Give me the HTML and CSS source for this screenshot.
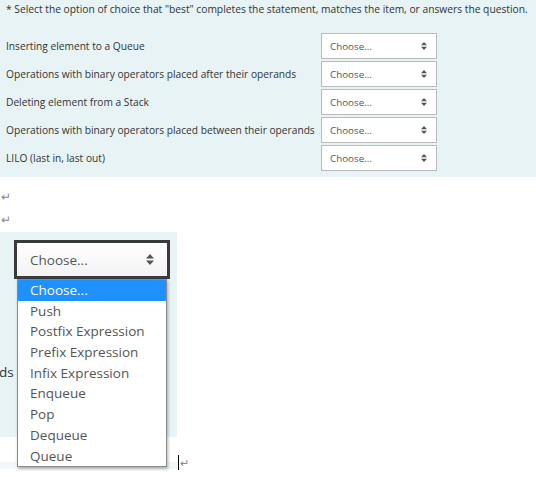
FILE: index.html
```html
<!DOCTYPE html>
<html lang="en">
<head>
    <meta charset="UTF-8">
    <title>Matching question</title>
    <link rel="stylesheet" href="styles.css">
</head>
<body>
    <div class="question">
        <p class="prompt">* Select the option of choice that "best" completes the statement, matches the item, or answers the question.</p>
        <div class="rows">
            <div class="label">Inserting element to a Queue</div>
            <div class="choose">Choose... <svg class="arrows" width="6" height="8" viewBox="0 0 6 8"><path d="M0 3.3 L3 0 L6 3.3 Z M0 4.7 L3 8 L6 4.7 Z"/></svg></div>
            <div class="label">Operations with binary operators placed after their operands</div>
            <div class="choose">Choose... <svg class="arrows" width="6" height="8" viewBox="0 0 6 8"><path d="M0 3.3 L3 0 L6 3.3 Z M0 4.7 L3 8 L6 4.7 Z"/></svg></div>
            <div class="label">Deleting element from a Stack</div>
            <div class="choose">Choose... <svg class="arrows" width="6" height="8" viewBox="0 0 6 8"><path d="M0 3.3 L3 0 L6 3.3 Z M0 4.7 L3 8 L6 4.7 Z"/></svg></div>
            <div class="label">Operations with binary operators placed between their operands</div>
            <div class="choose">Choose... <svg class="arrows" width="6" height="8" viewBox="0 0 6 8"><path d="M0 3.3 L3 0 L6 3.3 Z M0 4.7 L3 8 L6 4.7 Z"/></svg></div>
            <div class="label">LILO (last in, last out)</div>
            <div class="choose">Choose... <svg class="arrows" width="6" height="8" viewBox="0 0 6 8"><path d="M0 3.3 L3 0 L6 3.3 Z M0 4.7 L3 8 L6 4.7 Z"/></svg></div>
        </div>
    </div>

    <div class="returns">
        <div class="return">↵</div>
        <div class="return">↵</div>
    </div>

    <div class="answer">
        <div class="big-choose">
            <span>Choose...</span>
            <svg class="arrows" width="8" height="11" viewBox="0 0 8 11"><path d="M0 4.5 L4 0 L8 4.5 Z M0 6.5 L4 11 L8 6.5 Z"/></svg>
        </div>
        <div class="cut">ds</div>
        <ul class="options">
            <li class="selected">Choose...</li>
            <li>Push</li>
            <li>Postfix Expression</li>
            <li>Prefix Expression</li>
            <li>Infix Expression</li>
            <li>Enqueue</li>
            <li>Pop</li>
            <li>Dequeue</li>
            <li>Queue</li>
        </ul>
    </div>
    <div class="after">
        <div class="strip"></div>
        <div class="caret">↵</div>
    </div>
</body>
</html>
```

FILE: styles.css
```css
body {
    margin: 0;
    font-family: 'Open Sans', sans-serif;
    color: #333;
    background: #fff;
}
.question {
    background-color: #e7f3f5;
    padding: 3px 6px 5px;
    height: 169px;
}
.prompt {
    margin: 0 0 17px;
    font-size: 10.25px;
    line-height: 13px;
    white-space: nowrap;
}
.rows {
    display: grid;
    grid-template-columns: 315px 116px;
    row-gap: 2px;
    align-items: center;
    font-size: 10.2px;
}
.choose {
    height: 24px;
    border: 1px solid #bbb;
    background-color: #fff;
    display: flex;
    align-items: center;
    justify-content: space-between;
    padding: 0 9px 0 8px;
    color: #555;
    font-size: 9.8px;
}
.arrows {
    fill: #555;
}
.returns {
    padding-top: 8px;
}
.return {
    color: #888;
    font-size: 12px;
    line-height: 23px;
    padding-left: 1px;
    height: 23px;
}
.answer {
    position: relative;
    width: 177px;
    height: 205px;
    margin-top: 1px;
    background-color: #e7f3f5;
    padding-top: 8px;
    box-sizing: border-box;
}
.big-choose {
    margin-left: 14px;
    height: 33px;
    border: 3px solid #3a3a3a;
    background: linear-gradient(#fff, #f3f3f3);
    display: flex;
    align-items: center;
    justify-content: space-between;
    padding: 0 13px 0 13px;
    width: 124px;
    font-size: 13.5px;
    color: #555;
}
.cut {
    position: absolute;
    left: -1px;
    top: 131px;
    font-size: 13.5px;
}
.options {
    position: absolute;
    left: 17px;
    top: 47px;
    width: 148px;
    margin: 0;
    padding: 0;
    list-style: none;
    background-color: #fff;
    border: 1px solid #8a8a8a;
    box-shadow: 1px 2px 3px rgba(0, 0, 0, 0.3);
    z-index: 2;
}
.options li {
    height: 20.7px;
    line-height: 20.7px;
    padding-left: 12px;
    font-size: 13.5px;
    color: #555;
}
.options li.selected {
    background-color: #1e90ff;
    color: #fff;
}
.after {
    position: relative;
    height: 34px;
    padding-top: 25px;
    box-sizing: border-box;
}
.strip {
    width: 177px;
    height: 7px;
    background-color: #f2f8f9;
}
.caret {
    position: absolute;
    left: 178px;
    top: 18px;
    height: 15px;
    font-size: 11px;
    color: #888;
    border-left: 1px solid #000;
    padding-left: 1px;
    line-height: 15px;
}
```
